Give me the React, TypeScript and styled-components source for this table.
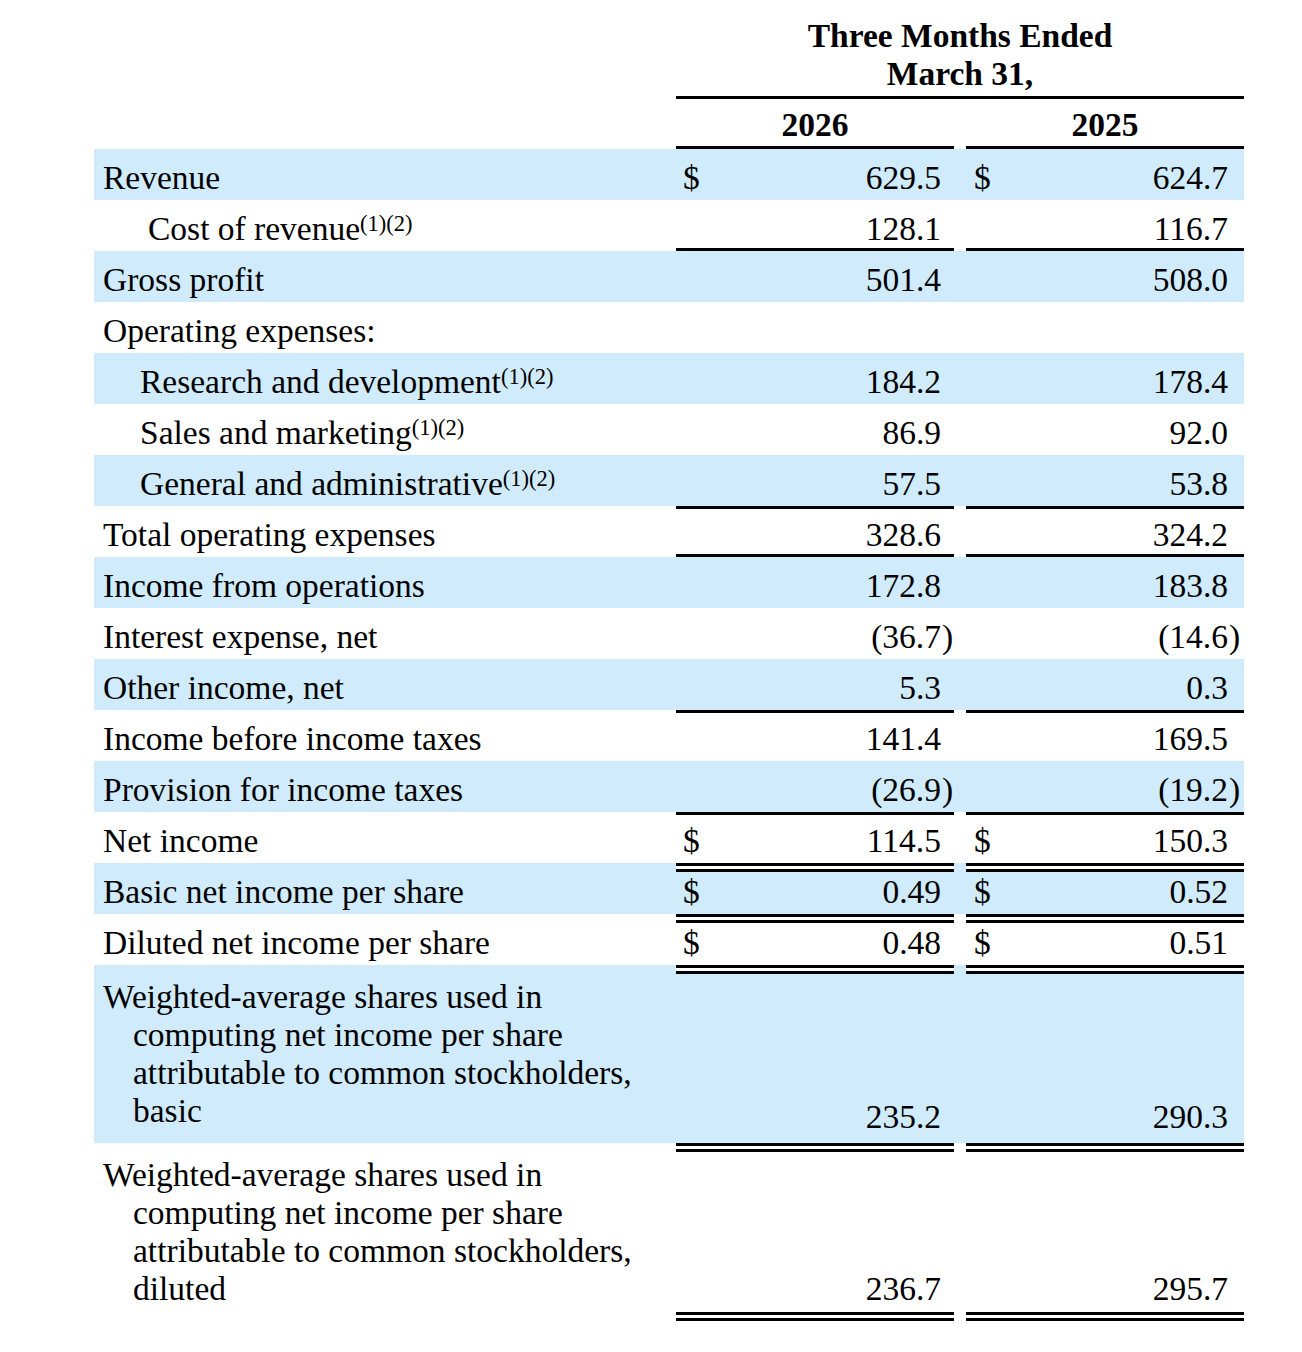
import React from 'react';
import styled, { createGlobalStyle } from 'styled-components';

type Rule = 'single' | 'double';

interface Line {
  label: React.ReactNode;
  indent?: number;
  sup?: boolean;
  a: string;
  b: string;
  dollar?: boolean;
  blue?: boolean;
  top?: Rule;
  bottom?: Rule;
  tall?: boolean;
}

const GlobalStyle = createGlobalStyle`
  html, body {
    margin: 0;
    background: #fff;
  }
`;

// rule width: single is one 3px line, double is two 3px lines with a gap
const rule = (r?: Rule) =>
  r === 'double' ? '9px double #000' : r === 'single' ? '3px solid #000' : 'none';

const Page = styled.div`
  padding: 17px 0 30px 94px;
`;

const Table = styled.table`
  border-collapse: separate;
  border-spacing: 0;
  table-layout: fixed;
  width: 1150px;
  font-family: 'Liberation Serif', 'Times New Roman', serif;
  font-size: 33.5px;
  line-height: 38px;
  color: #000;
`;

const Col = styled.col<{ $w: number }>`
  width: ${p => p.$w}px;
`;

const Row = styled.tr<{ $blue?: boolean; $h: number }>`
  height: ${p => p.$h}px;

  & > td {
    background-color: ${p => (p.$blue ? '#d0ebfc' : 'transparent')};
  }
`;

const HeadCell = styled.td<{ $pb: number }>`
  padding: 0 0 ${p => p.$pb}px;
  text-align: center;
  font-weight: 700;
  vertical-align: bottom;
  border-bottom: 3px solid #000;
`;

const Blank = styled.td`
  padding: 0;
`;

const Label = styled.td<{ $indent: number; $pt: number; $hang?: boolean }>`
  padding: ${p => p.$pt}px 0 0 ${p => p.$indent + (p.$hang ? 30 : 0)}px;
  text-indent: ${p => (p.$hang ? -30 : 0)}px;
  vertical-align: top;
  white-space: nowrap;
`;

const Sup = styled.span`
  font-size: 22.5px;
  line-height: 0;
  vertical-align: 9px;
`;

const Figure = styled.td<{
  $top?: Rule;
  $bottom?: Rule;
  $align: 'left' | 'right';
  $side: number;
  $lift: number;
}>`
  padding: 0 ${p => (p.$align === 'right' ? p.$side : 0)}px ${p => p.$lift}px
    ${p => (p.$align === 'left' ? p.$side : 0)}px;
  text-align: ${p => p.$align};
  vertical-align: bottom;
  white-space: nowrap;
  border-top: ${p => rule(p.$top)};
  border-bottom: ${p => rule(p.$bottom)};
  background-clip: padding-box;
`;

const rows: Line[] = [
  { label: 'Revenue', a: '629.5', b: '624.7', dollar: true, blue: true },
  { label: 'Cost of revenue', sup: true, indent: 45, a: '128.1', b: '116.7', bottom: 'single' },
  { label: 'Gross profit', a: '501.4', b: '508.0', blue: true },
  { label: 'Operating expenses:', a: '', b: '' },
  { label: 'Research and development', sup: true, indent: 37, a: '184.2', b: '178.4', blue: true },
  { label: 'Sales and marketing', sup: true, indent: 37, a: '86.9', b: '92.0' },
  { label: 'General and administrative', sup: true, indent: 37, a: '57.5', b: '53.8', blue: true },
  { label: 'Total operating expenses', a: '328.6', b: '324.2', top: 'single', bottom: 'single' },
  { label: 'Income from operations', a: '172.8', b: '183.8', blue: true },
  { label: 'Interest expense, net', a: '(36.7)', b: '(14.6)' },
  { label: 'Other income, net', a: '5.3', b: '0.3', blue: true },
  { label: 'Income before income taxes', a: '141.4', b: '169.5', top: 'single' },
  { label: 'Provision for income taxes', a: '(26.9)', b: '(19.2)', blue: true },
  { label: 'Net income', a: '114.5', b: '150.3', dollar: true, top: 'single' },
  { label: 'Basic net income per share', a: '0.49', b: '0.52', dollar: true, blue: true, top: 'double' },
  { label: 'Diluted net income per share', a: '0.48', b: '0.51', dollar: true, top: 'double' },
  {
    label: (
      <>
        Weighted-average shares used in<br />
        computing net income per share<br />
        attributable to common stockholders,<br />
        basic
      </>
    ),
    a: '235.2',
    b: '290.3',
    blue: true,
    top: 'double',
    tall: true,
  },
  {
    label: (
      <>
        Weighted-average shares used in<br />
        computing net income per share<br />
        attributable to common stockholders,<br />
        diluted
      </>
    ),
    a: '236.7',
    b: '295.7',
    top: 'double',
    bottom: 'double',
    tall: true,
  },
];

// "(36.7)" -> number "(36.7" plus a hanging ")"
const split = (v: string): [string, string] => (v.endsWith(')') ? [v.slice(0, -1), ')'] : [v, '']);

const Amount: React.FC<{ line: Line; value: string; pad: number }> = ({ line, value, pad }) => {
  const [num, close] = split(value);
  const lift = (line.bottom ? 0 : 3) + (line.tall ? 4 : 0);
  const rules = { $top: line.top, $bottom: line.bottom, $lift: lift };
  return (
    <>
      <Figure {...rules} $align="left" $side={pad}>
        {line.dollar ? '$' : ''}
      </Figure>
      <Figure {...rules} $align="right" $side={1}>
        {num}
      </Figure>
      <Figure {...rules} $align="left" $side={0}>
        {close}
      </Figure>
    </>
  );
};

const IncomeStatement: React.FC = () => {
  return (
    <Page>
      <Table>
        <colgroup>
          <Col $w={582} />
          <Col $w={46} />
          <Col $w={220} />
          <Col $w={12} />
          <Col $w={12} />
          <Col $w={45} />
          <Col $w={218} />
          <Col $w={15} />
        </colgroup>
        <tbody>
          <Row $h={82}>
            <Blank />
            <HeadCell colSpan={7} $pb={3}>
              Three Months Ended
              <br />
              March 31,
            </HeadCell>
          </Row>
          <Row $h={50}>
            <Blank />
            <HeadCell colSpan={3} $pb={2}>
              2026
            </HeadCell>
            <Blank />
            <HeadCell colSpan={3} $pb={2}>
              2025
            </HeadCell>
          </Row>
          {rows.map((line, i) => (
            <Row key={i} $blue={line.blue} $h={line.tall ? 178 : 51}>
              <Label $indent={9 + (line.indent ?? 0)} $pt={line.tall ? 13 : 10} $hang={line.tall}>
                {line.label}
                {line.sup && <Sup>(1)(2)</Sup>}
              </Label>
              <Amount line={line} value={line.a} pad={7} />
              <Blank />
              <Amount line={line} value={line.b} pad={8} />
            </Row>
          ))}
        </tbody>
      </Table>
    </Page>
  );
};

export default function App() {
  return (
    <>
      <GlobalStyle />
      <IncomeStatement />
    </>
  );
}
